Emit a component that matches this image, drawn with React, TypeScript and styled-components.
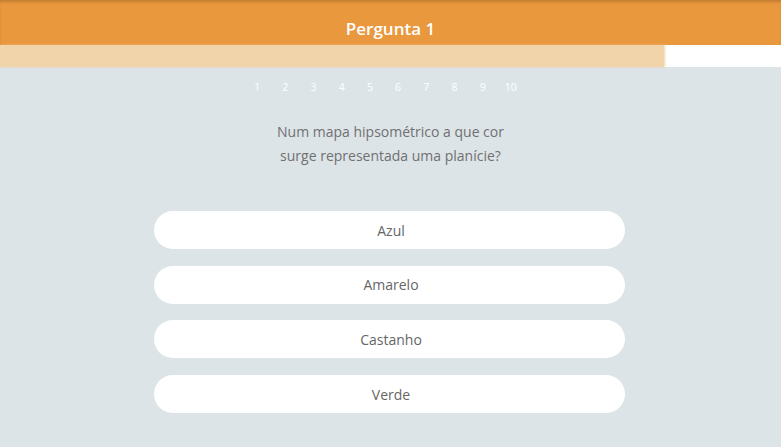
import React from "react";
import styled, { createGlobalStyle } from "styled-components";

const Global = createGlobalStyle`
  html, body { margin: 0; padding: 0; }
  body { background: #dde4e8; font-family: "Open Sans", "Liberation Sans", sans-serif; }
`;

const Page = styled.div`
  width: 781px;
  height: 447px;
  background: #dde4e8;
  display: flex;
  flex-direction: column;
  overflow: hidden;
`;

const Header = styled.header`
  height: 45px;
  background: #e9983e;
  box-shadow: inset 0 3px 3px -1px rgba(150, 90, 30, 0.45);
  display: flex;
  align-items: center;
  justify-content: center;
  color: #fff;
  font-size: 17px;
  font-weight: 600;
  padding-top: 11px;
  box-sizing: border-box;
`;

const Track = styled.div`
  height: 22px;
  background: #ffffff;
  display: flex;
`;

const Fill = styled.div`
  height: 100%;
  background: #f1d4aa;
  box-shadow: 1px 0 2px rgba(240, 200, 150, 0.8);
`;

const Steps = styled.div`
  display: flex;
  justify-content: center;
  padding-right: 13px;
  margin-top: 12px;
  height: 16px;
`;

const Step = styled.span`
  width: 28.2px;
  text-align: center;
  color: #fff;
  font-size: 10.5px;
  font-weight: 500;
  line-height: 16px;
`;

const Question = styled.p`
  margin: 25px auto 0;
  max-width: 250px;
  text-align: center;
  color: #707070;
  font-size: 14px;
  font-weight: 400;
  line-height: 24px;
`;

const Answers = styled.div`
  display: flex;
  flex-direction: column;
  gap: 16.7px;
  width: 471px;
  margin: 43px 0 0 154px;
`;

const Answer = styled.button`
  height: 38px;
  border: none;
  border-radius: 19px;
  background: #fff;
  color: #666;
  font-family: "Open Sans", "Liberation Sans", sans-serif;
  font-size: 14px;
  font-weight: 400;
  padding: 0 0 0 3px;
  cursor: pointer;
`;

const answers = ["Azul", "Amarelo", "Castanho", "Verde"];

export default function App() {
  const progress = 664 / 781;
  return (
    <Page>
      <Global />
      <Header>Pergunta 1</Header>
      <Track>
        <Fill style={{ width: `${progress * 100}%` }} />
      </Track>
      <Steps>
        {Array.from({ length: 10 }, (_, i) => (
          <Step key={i}>{i + 1}</Step>
        ))}
      </Steps>
      <Question>Num mapa hipsométrico a que cor surge representada uma planície?</Question>
      <Answers>
        {answers.map((a) => (
          <Answer key={a}>{a}</Answer>
        ))}
      </Answers>
    </Page>
  );
}
